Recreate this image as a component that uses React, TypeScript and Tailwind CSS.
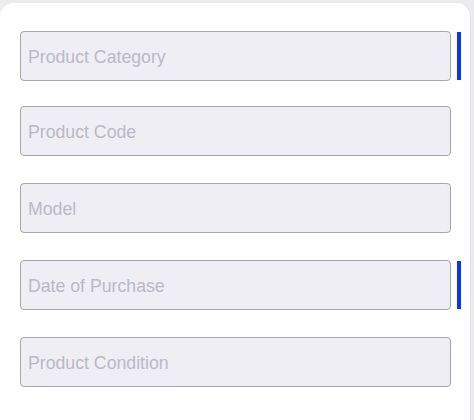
import React from 'react';

const fields = [
  { label: 'Product Category', marker: true, gap: '' },
  { label: 'Product Code', marker: false, gap: 'mt-[25px]' },
  { label: 'Model', marker: false, gap: 'mt-[27px]' },
  { label: 'Date of Purchase', marker: true, gap: 'mt-[27px]' },
  { label: 'Product Condition', marker: false, gap: 'mt-[27px]' },
];

export default function App() {
  return (
    <div className="w-[474px] h-[420px] bg-[#ececef] pt-[3px] overflow-hidden" style={{ fontFamily: '"Liberation Sans", Arial, sans-serif' }}>
      <div className="w-[471px] h-[420px] bg-white rounded-t-[14px] border-r border-[#e2e2e6] pt-[28px] pl-[20px]">
        <div className="flex flex-col">
          {fields.map(f => (
            <div key={f.label} className={`flex items-center gap-[6px] ${f.gap}`}>
              <div className="w-[431px] h-[50px] bg-[#efeef4] border border-[#a6a6ab] rounded-[4px] flex items-center pl-[7px] pt-[2px]">
                <span className="text-[17.7px] text-[#bab9c6]">{f.label}</span>
              </div>
              {f.marker && <div className="w-[4px] h-[48px] bg-[#0a35f0]" />}
            </div>
          ))}
        </div>
      </div>
    </div>
  );
}
